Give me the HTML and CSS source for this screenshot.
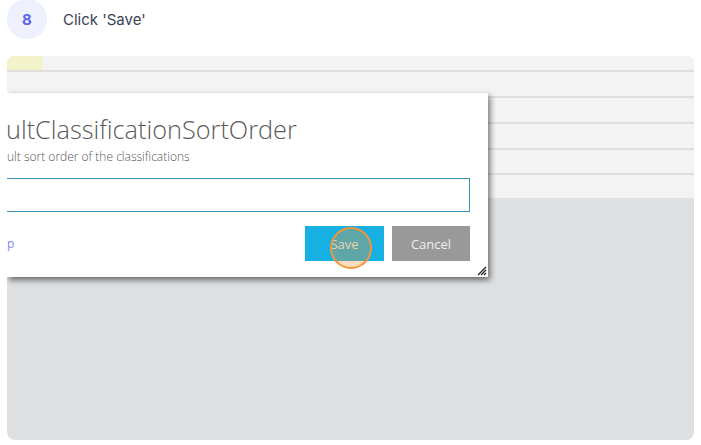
FILE: index.html
```html
<!DOCTYPE html>
<html>
<head>
<meta charset="utf-8">
<link rel="stylesheet" href="styles.css">
</head>
<body>
<div class="step">
  <div class="badge">8</div>
  <div class="step-text">Click 'Save'</div>
</div>
<div class="shot">
  <div class="table">
    <div class="row first"><span class="hl"></span></div>
    <div class="row"></div>
    <div class="row"></div>
    <div class="row"></div>
    <div class="row"></div>
    <div class="row"></div>
  </div>
  <div class="dialog">
    <div class="title">ultClassificationSortOrder</div>
    <div class="subtitle">ult sort order of the classifications</div>
    <div class="input"></div>
    <div class="actions">
      <span class="link">p</span>
      <div class="buttons">
        <div class="btn save">Save</div>
        <div class="btn cancel">Cancel</div>
      </div>
    </div>
    <div class="click-ring"></div>
    <svg class="grip" width="10" height="10" viewBox="0 0 10 10">
      <path d="M9 1 L1 9 M9 4 L4 9 M9 7 L7 9" stroke="#222" stroke-width="1.3"/>
    </svg>
  </div>
</div>
</body>
</html>
```
FILE: styles.css
```css
html, body {
  margin: 0;
  padding: 0;
  background: #ffffff;
}
body {
  width: 701px;
  height: 445px;
  overflow: hidden;
  font-family: "Open Sans", "Liberation Sans", sans-serif;
}
.step {
  display: flex;
  align-items: center;
  height: 39px;
  padding-left: 7px;
}
.badge {
  width: 40px;
  height: 40px;
  border-radius: 50%;
  background: #eef0fd;
  color: #5c67e6;
  font-family: Inter, "Noto Sans", sans-serif;
  font-weight: 700;
  font-size: 15px;
  display: flex;
  align-items: center;
  justify-content: center;
  margin-top: -1px;
}
.step-text {
  margin-left: 16px;
  font-family: Inter, "Noto Sans", sans-serif;
  font-size: 15px;
  color: #3b4256;
}
.shot {
  position: relative;
  margin: 17px 7px 0 7px;
  height: 384px;
  background: #dfe0e2;
  border-radius: 8px;
  overflow: hidden;
}
.table {
  background: #f3f3f3;
}
.row {
  height: 24px;
  border-top: 2px solid #dedede;
}
.row.first {
  height: 14px;
  border-top: none;
}
.row:nth-child(5) { height: 23px; }
.row:last-child { height: 23px; }
.hl {
  display: block;
  width: 36px;
  height: 14px;
  background: #f3f3cb;
}
.dialog {
  position: absolute;
  left: 0;
  top: 37px;
  width: 481px;
  height: 184px;
  background: #ffffff;
  box-shadow: 2px 3px 6px rgba(0, 0, 0, 0.55);
}
.title {
  padding-top: 21px;
  margin-left: -1px;
  font-size: 25.3px;
  font-weight: 300;
  line-height: 30px;
  color: #5a5a5a;
  white-space: nowrap;
}
.subtitle {
  margin-top: 6px;
  font-size: 12px;
  font-weight: 300;
  line-height: 14px;
  color: #555555;
  white-space: nowrap;
}
.input {
  margin-top: 14px;
  width: 463px;
  height: 34px;
  box-sizing: border-box;
  border: 1px solid #3d93b5;
  border-left: none;
}
.actions {
  display: flex;
  align-items: center;
  justify-content: space-between;
  margin-top: 14px;
  width: 463px;
}
.link {
  color: #8585ec;
  font-size: 12px;
}
.buttons {
  display: flex;
  gap: 8px;
}
.btn {
  width: 79px;
  height: 35px;
  display: flex;
  align-items: center;
  justify-content: center;
  font-size: 13px;
}
.save {
  background: #17b0e2;
  color: #e6ecea;
}
.cancel {
  width: 78px;
  background: #999999;
  color: #eeeeee;
}
.click-ring {
  position: absolute;
  left: 323px;
  top: 134px;
  width: 38px;
  height: 38px;
  border-radius: 50%;
  border: 2px solid #f39638;
  background: rgba(245, 146, 46, 0.32);
}
.grip {
  position: absolute;
  right: 1px;
  bottom: 1px;
}
```
